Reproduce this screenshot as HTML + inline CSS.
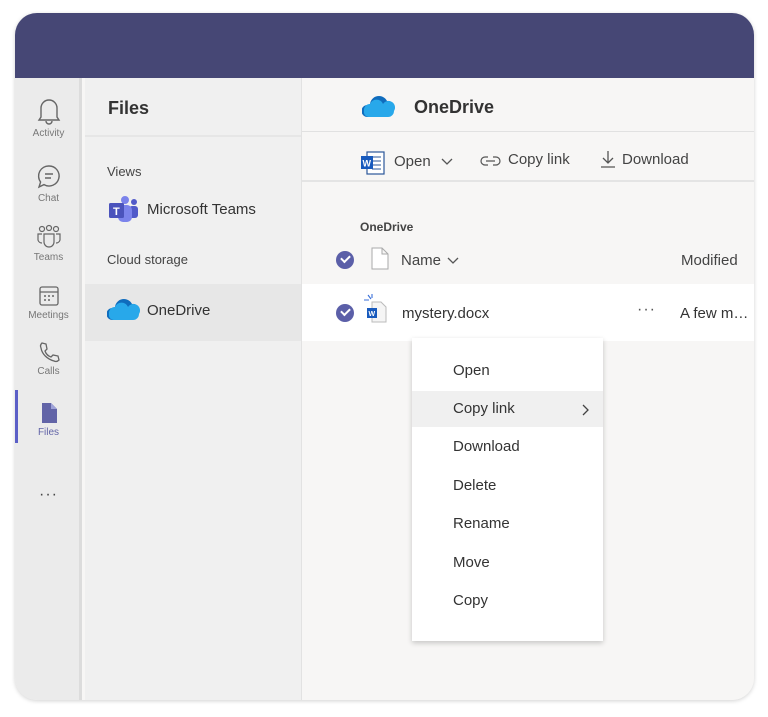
<!DOCTYPE html>
<html><head><meta charset="utf-8"><style>
*{margin:0;padding:0;box-sizing:border-box}
body{width:768px;height:717px;background:#fff;font-family:"Liberation Sans",sans-serif;position:relative;overflow:hidden;color:#252423}
.card{position:absolute;left:15px;top:13px;width:739px;height:687px;border-radius:22px;overflow:hidden;background:#f7f6f5;box-shadow:0 1px 4px rgba(0,0,0,.18)}
.hdr{position:absolute;left:0;top:0;width:100%;height:65px;background:#464775}
.rail{position:absolute;left:0;top:65px;width:67px;bottom:0;background:#ebebeb;border-right:3px solid #dcdcdc}
.files{position:absolute;left:70px;top:65px;width:217px;bottom:0;background:#f0f0f0;border-right:1px solid #e2e2e2}
.main{position:absolute;left:287px;top:65px;right:0;bottom:0;background:#f7f6f5}
.ri{position:absolute;left:0;width:67px;text-align:center;font-size:10px;color:#777}
.ri svg{display:block;margin:0 auto 2px}
.abs{position:absolute}
.menu{position:absolute;left:397px;top:325px;width:191px;height:303px;background:#fff;box-shadow:0 2px 5px rgba(0,0,0,.2)}
.mi{position:absolute;left:41px;font-size:15px;color:#333}
.chk{position:absolute;width:18px;height:18px;border-radius:50%;background:#5b5fa8}
.chk:after{content:"";position:absolute;left:5px;top:4px;width:7px;height:4px;border-left:2px solid #fff;border-bottom:2px solid #fff;transform:rotate(-45deg)}
</style></head><body>
<div class="card">
 <div class="hdr"></div>
 <div class="rail">
  <div class="ri" style="top:18px"><svg width="26" height="30" viewBox="0 0 26 30"><path d="M5 21V12a8 8 0 0116 0v9l2 3H3z M10 25a3 3 0 006 0" fill="none" stroke="#666" stroke-width="1.4"/></svg>Activity</div>
  <div class="ri" style="top:85px"><svg width="26" height="28" viewBox="0 0 26 28"><path d="M13 3a10 10 0 11-5 18.6L3 24l1.6-5A10 10 0 0113 3z M9 11h8M9 15h6" fill="none" stroke="#666" stroke-width="1.4"/></svg>Chat</div>
  <div class="ri" style="top:146px"><svg width="28" height="26" viewBox="0 0 28 26"><circle cx="7" cy="5" r="2.5" fill="none" stroke="#666" stroke-width="1.2"/><circle cx="14" cy="4" r="2.5" fill="none" stroke="#666" stroke-width="1.2"/><circle cx="21" cy="5" r="2.5" fill="none" stroke="#666" stroke-width="1.2"/><path d="M9 10h10v8a5 5 0 01-10 0z M7 10H3v6a4 4 0 004 3 M21 10h4v6a4 4 0 01-4 3" fill="none" stroke="#666" stroke-width="1.2"/></svg>Teams</div>
  <div class="ri" style="top:206px"><svg width="24" height="24" viewBox="0 0 24 24"><rect x="3" y="3" width="18" height="18" rx="2" fill="none" stroke="#666" stroke-width="1.3"/><path d="M3 8h18" stroke="#666" stroke-width="1.3"/><g fill="#666"><circle cx="8" cy="12" r="1"/><circle cx="12" cy="12" r="1"/><circle cx="16" cy="12" r="1"/><circle cx="8" cy="16" r="1"/><circle cx="12" cy="16" r="1"/></g></svg>Meetings</div>
  <div class="ri" style="top:262px"><svg width="24" height="24" viewBox="0 0 24 24"><path d="M5 3l4 1 1 5-2 2c1 3 3 5 6 6l2-2 5 1 1 4c-1 1-3 2-5 1C10 19 5 14 4 8 3 6 4 4 5 3z" fill="none" stroke="#666" stroke-width="1.3"/></svg>Calls</div>
  <div class="abs" style="left:0;top:312px;width:3px;height:53px;background:#5b5fc7"></div>
  <div class="ri" style="top:323px;color:#6264a7"><svg width="24" height="24" viewBox="0 0 24 24"><path d="M5 2h9l6 6v14H5z" fill="#6264a7"/><path d="M14 2v6h6" fill="#9ea2d8"/></svg>Files</div>
  <div class="ri" style="top:408px;font-size:16px;color:#444;letter-spacing:1px">···</div>
 </div>
 <div class="files">
  <div class="abs" style="left:23px;top:20px;font-size:18px;font-weight:bold;color:#333">Files</div>
  <div class="abs" style="left:0;top:57px;width:100%;height:2px;background:#e6e6e6"></div>
  <div class="abs" style="left:22px;top:86px;font-size:13px;color:#444">Views</div>
  <svg class="abs" style="left:24px;top:117px" width="29" height="27" viewBox="0 0 29 27"><circle cx="16" cy="5" r="4" fill="#7b83eb"/><circle cx="25" cy="7" r="3" fill="#5059c9"/><rect x="20" y="11" width="9" height="12" rx="3" fill="#5059c9"/><rect x="9" y="10" width="14" height="17" rx="5" fill="#7b83eb"/><rect x="0" y="8" width="15" height="15" rx="1.5" fill="#4b53bc"/><text x="4" y="20" font-size="11" font-weight="bold" fill="#fff" font-family="Liberation Sans">T</text></svg>
  <div class="abs" style="left:62px;top:123px;font-size:15px;color:#333">Microsoft Teams</div>
  <div class="abs" style="left:22px;top:174px;font-size:13px;color:#444">Cloud storage</div>
  <div class="abs" style="left:0;top:206px;width:100%;height:57px;background:#e7e7e7"></div>
  <svg class="abs" style="left:22px;top:220px" width="33" height="22" viewBox="0 0 33 22"><path d="M8 9a9 9 0 0117-3 6 6 0 017 5l-6 11H6a6 6 0 01-1-12z" fill="#0f6cbd"/><path d="M2 16a6 6 0 016-7 7 7 0 0113 0 6 6 0 0111 7 6 6 0 01-6 6H7a5 5 0 01-5-6z" fill="#28a8ea"/></svg>
  <div class="abs" style="left:62px;top:224px;font-size:15px;color:#333">OneDrive</div>
 </div>
 <div class="main">
  <svg class="abs" style="left:60px;top:17px" width="33" height="22" viewBox="0 0 33 22"><path d="M8 9a9 9 0 0117-3 6 6 0 017 5l-6 11H6a6 6 0 01-1-12z" fill="#0f6cbd"/><path d="M2 16a6 6 0 016-7 7 7 0 0113 0 6 6 0 0111 7 6 6 0 01-6 6H7a5 5 0 01-5-6z" fill="#28a8ea"/></svg>
  <div class="abs" style="left:112px;top:19px;font-size:18px;font-weight:bold;color:#333">OneDrive</div>
  <div class="abs" style="left:0;top:53px;width:100%;height:1px;background:#e1e1e1"></div>
  <svg class="abs" style="left:59px;top:73px" width="24" height="24" viewBox="0 0 24 24"><rect x="6" y="1" width="17" height="22" fill="#fff" stroke="#2b579a" stroke-width="1.2"/><path d="M11 6h9M11 10h9M11 14h9M11 18h9" stroke="#2b579a"/><rect x="0" y="5" width="12" height="13" fill="#185abd"/><text x="1.5" y="15.5" font-size="9" font-weight="bold" fill="#fff" font-family="Liberation Sans">W</text></svg>
  <div class="abs" style="left:92px;top:75px;font-size:15px;color:#444">Open</div>
  <svg class="abs" style="left:139px;top:80px" width="12" height="8"><path d="M1 1l5 5 5-5" fill="none" stroke="#555" stroke-width="1.3"/></svg>
  <svg class="abs" style="left:177px;top:77px" width="23" height="12" viewBox="0 0 23 12"><path d="M9 2H6a4 4 0 000 8h3M14 2h3a4 4 0 010 8h-3M7 6h9" fill="none" stroke="#555" stroke-width="1.2"/></svg>
  <div class="abs" style="left:206px;top:73px;font-size:15px;color:#444">Copy link</div>
  <svg class="abs" style="left:298px;top:72px" width="16" height="18" viewBox="0 0 16 18"><path d="M8 1v12M3 8l5 5 5-5M1 17h14" fill="none" stroke="#555" stroke-width="1.3"/></svg>
  <div class="abs" style="left:320px;top:73px;font-size:15px;color:#444">Download</div>
  <div class="abs" style="left:0;top:102px;width:100%;height:2px;background:#e4e4e4"></div>
  <div class="abs" style="left:58px;top:142px;font-size:12px;font-weight:bold;color:#444">OneDrive</div>
  <div class="chk" style="left:34px;top:173px"></div>
  <svg class="abs" style="left:69px;top:169px" width="18" height="23" viewBox="0 0 18 23"><path d="M1 1h10l6 6v15H1z M11 1v6h6" fill="#fff" stroke="#aaa" stroke-width="1"/></svg>
  <div class="abs" style="left:99px;top:174px;font-size:15px;color:#444">Name</div>
  <svg class="abs" style="left:145px;top:179px" width="12" height="8"><path d="M1 1l5 5 5-5" fill="none" stroke="#555" stroke-width="1.3"/></svg>
  <div class="abs" style="left:379px;top:174px;font-size:15px;color:#444">Modified</div>
  <div class="abs" style="left:0;top:206px;width:100%;height:57px;background:#fff"></div>
  <div class="chk" style="left:34px;top:226px"></div>
  <svg class="abs" style="left:60px;top:215px" width="26" height="30" viewBox="0 0 26 30"><path d="M2 7h5M6 2l3 4M10 1v4" stroke="#3a6fd8" stroke-width="1.1"/><path d="M10 9h9l5 5v15H10z" fill="#f5f5f5" stroke="#bbb"/><rect x="5" y="15" width="10" height="10" fill="#185abd"/><text x="6.5" y="23" font-size="7" font-weight="bold" fill="#fff" font-family="Liberation Sans">W</text></svg>
  <div class="abs" style="left:100px;top:227px;font-size:15px;color:#333">mystery.docx</div>
  <div class="abs" style="left:335px;top:223px;font-size:16px;color:#555;letter-spacing:1px">···</div>
  <div class="abs" style="left:378px;top:227px;font-size:15px;color:#333;white-space:nowrap">A few m…</div>
 </div>
 <div class="menu">
  <div class="mi" style="top:24px">Open</div>
  <div class="abs" style="left:0;top:53px;width:191px;height:36px;background:#f0f0f0"></div>
  <div class="mi" style="top:62px">Copy link</div>
  <svg class="abs" style="left:170px;top:66px" width="8" height="12"><path d="M1 1l5 5-5 5" fill="none" stroke="#444" stroke-width="1.3"/></svg>
  <div class="mi" style="top:100px">Download</div>
  <div class="mi" style="top:139px">Delete</div>
  <div class="mi" style="top:177px">Rename</div>
  <div class="mi" style="top:216px">Move</div>
  <div class="mi" style="top:254px">Copy</div>
 </div>
</div>
</body></html>
